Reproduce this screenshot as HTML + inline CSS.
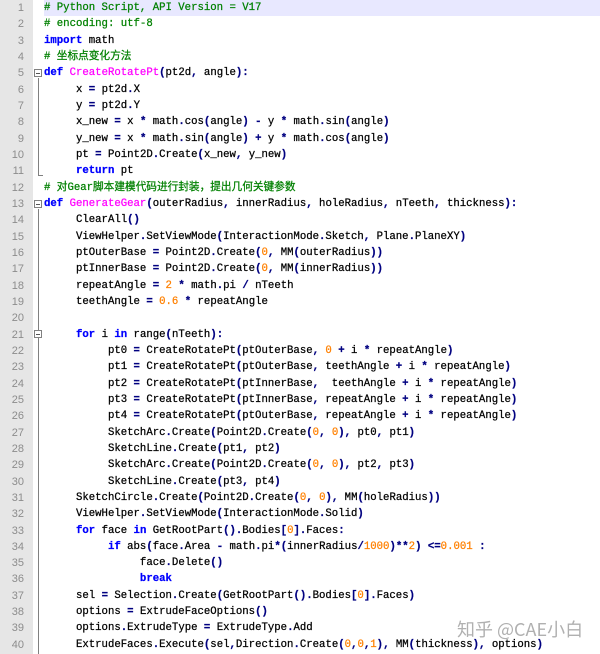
<!DOCTYPE html>
<html><head><meta charset="utf-8"><style>
html,body{margin:0;padding:0;background:#fff;width:600px;height:654px;overflow:hidden;position:relative}
.g{position:absolute;left:0;top:0;width:33px;height:654px;background:#e6e6e6}
.fl{position:absolute;left:38px;width:1px;background:#808080}
.fb{position:absolute;left:34px;width:8px;height:8px;border:1px solid #808080;background:#fff;box-sizing:border-box}
.fb:after{content:"";position:absolute;left:1px;top:3px;width:4px;height:1px;background:#555}
.hl{position:absolute;left:44px;top:0;width:556px;height:16px;background:#e8e8ff}
.ln{position:absolute;left:0;width:24px;text-align:right;font:11px "Liberation Sans",sans-serif;color:#8c8c8c}
.code{position:absolute;left:44px;top:0;font-family:"Liberation Mono","Noto Sans CJK SC",monospace;font-size:10.67px;color:#000;-webkit-text-stroke:0.25px}
.l{height:16.33px;line-height:16.33px;white-space:pre}
.c{color:#008000}.k{color:#0000ff;font-weight:bold}.f{color:#ff00ff}.n{color:#ff8000}.o{color:#000080;font-weight:bold}
.wm{position:absolute;left:457px;top:616px;font:18px "Noto Sans CJK SC",sans-serif;color:rgba(150,150,150,0.75)}
</style></head><body>
<div class="g"></div>
<div class="hl"></div>
<div class="fl" style="top:78px;height:97px"></div>
<div class="fl" style="top:209px;height:445px"></div>
<div class="fb" style="top:69px"></div>
<div class="fb" style="top:200px"></div>
<div class="fb" style="top:330px"></div>
<div style="position:absolute;left:38px;top:175px;width:5px;height:1px;background:#808080"></div>
<div class="code"><div class="l"><span class="c"># Python Script, API Version = V17</span></div><div class="l"><span class="c"># encoding: utf-8</span></div><div class="l"><span class="k">import</span> math</div><div class="l"><span class="c"># 坐标点变化方法</span></div><div class="l"><span class="k">def</span> <span class="f">CreateRotatePt</span><span class="o">(</span>pt2d<span class="o">,</span> angle<span class="o">):</span></div><div class="l">     x <span class="o">=</span> pt2d<span class="o">.</span>X</div><div class="l">     y <span class="o">=</span> pt2d<span class="o">.</span>Y</div><div class="l">     x_new <span class="o">=</span> x <span class="o">*</span> math<span class="o">.</span>cos<span class="o">(</span>angle<span class="o">)</span> <span class="o">-</span> y <span class="o">*</span> math<span class="o">.</span>sin<span class="o">(</span>angle<span class="o">)</span></div><div class="l">     y_new <span class="o">=</span> x <span class="o">*</span> math<span class="o">.</span>sin<span class="o">(</span>angle<span class="o">)</span> <span class="o">+</span> y <span class="o">*</span> math<span class="o">.</span>cos<span class="o">(</span>angle<span class="o">)</span></div><div class="l">     pt <span class="o">=</span> Point2D<span class="o">.</span>Create<span class="o">(</span>x_new<span class="o">,</span> y_new<span class="o">)</span></div><div class="l">     <span class="k">return</span> pt</div><div class="l"><span class="c"># 对Gear脚本建模代码进行封装，提出几何关键参数</span></div><div class="l"><span class="k">def</span> <span class="f">GenerateGear</span><span class="o">(</span>outerRadius<span class="o">,</span> innerRadius<span class="o">,</span> holeRadius<span class="o">,</span> nTeeth<span class="o">,</span> thickness<span class="o">):</span></div><div class="l">     ClearAll<span class="o">()</span></div><div class="l">     ViewHelper<span class="o">.</span>SetViewMode<span class="o">(</span>InteractionMode<span class="o">.</span>Sketch<span class="o">,</span> Plane<span class="o">.</span>PlaneXY<span class="o">)</span></div><div class="l">     ptOuterBase <span class="o">=</span> Point2D<span class="o">.</span>Create<span class="o">(</span><span class="n">0</span><span class="o">,</span> MM<span class="o">(</span>outerRadius<span class="o">))</span></div><div class="l">     ptInnerBase <span class="o">=</span> Point2D<span class="o">.</span>Create<span class="o">(</span><span class="n">0</span><span class="o">,</span> MM<span class="o">(</span>innerRadius<span class="o">))</span></div><div class="l">     repeatAngle <span class="o">=</span> <span class="n">2</span> <span class="o">*</span> math<span class="o">.</span>pi <span class="o">/</span> nTeeth</div><div class="l">     teethAngle <span class="o">=</span> <span class="n">0.6</span> <span class="o">*</span> repeatAngle</div><div class="l"> </div><div class="l">     <span class="k">for</span> i <span class="k">in</span> range<span class="o">(</span>nTeeth<span class="o">):</span></div><div class="l">          pt0 <span class="o">=</span> CreateRotatePt<span class="o">(</span>ptOuterBase<span class="o">,</span> <span class="n">0</span> <span class="o">+</span> i <span class="o">*</span> repeatAngle<span class="o">)</span></div><div class="l">          pt1 <span class="o">=</span> CreateRotatePt<span class="o">(</span>ptOuterBase<span class="o">,</span> teethAngle <span class="o">+</span> i <span class="o">*</span> repeatAngle<span class="o">)</span></div><div class="l">          pt2 <span class="o">=</span> CreateRotatePt<span class="o">(</span>ptInnerBase<span class="o">,</span>  teethAngle <span class="o">+</span> i <span class="o">*</span> repeatAngle<span class="o">)</span></div><div class="l">          pt3 <span class="o">=</span> CreateRotatePt<span class="o">(</span>ptInnerBase<span class="o">,</span> repeatAngle <span class="o">+</span> i <span class="o">*</span> repeatAngle<span class="o">)</span></div><div class="l">          pt4 <span class="o">=</span> CreateRotatePt<span class="o">(</span>ptOuterBase<span class="o">,</span> repeatAngle <span class="o">+</span> i <span class="o">*</span> repeatAngle<span class="o">)</span></div><div class="l">          SketchArc<span class="o">.</span>Create<span class="o">(</span>Point2D<span class="o">.</span>Create<span class="o">(</span><span class="n">0</span><span class="o">,</span> <span class="n">0</span><span class="o">),</span> pt0<span class="o">,</span> pt1<span class="o">)</span></div><div class="l">          SketchLine<span class="o">.</span>Create<span class="o">(</span>pt1<span class="o">,</span> pt2<span class="o">)</span></div><div class="l">          SketchArc<span class="o">.</span>Create<span class="o">(</span>Point2D<span class="o">.</span>Create<span class="o">(</span><span class="n">0</span><span class="o">,</span> <span class="n">0</span><span class="o">),</span> pt2<span class="o">,</span> pt3<span class="o">)</span></div><div class="l">          SketchLine<span class="o">.</span>Create<span class="o">(</span>pt3<span class="o">,</span> pt4<span class="o">)</span></div><div class="l">     SketchCircle<span class="o">.</span>Create<span class="o">(</span>Point2D<span class="o">.</span>Create<span class="o">(</span><span class="n">0</span><span class="o">,</span> <span class="n">0</span><span class="o">),</span> MM<span class="o">(</span>holeRadius<span class="o">))</span></div><div class="l">     ViewHelper<span class="o">.</span>SetViewMode<span class="o">(</span>InteractionMode<span class="o">.</span>Solid<span class="o">)</span></div><div class="l">     <span class="k">for</span> face <span class="k">in</span> GetRootPart<span class="o">().</span>Bodies<span class="o">[</span><span class="n">0</span><span class="o">].</span>Faces<span class="o">:</span></div><div class="l">          <span class="k">if</span> abs<span class="o">(</span>face<span class="o">.</span>Area <span class="o">-</span> math<span class="o">.</span>pi<span class="o">*(</span>innerRadius<span class="o">/</span><span class="n">1000</span><span class="o">)**</span><span class="n">2</span><span class="o">)</span> <span class="o">&lt;=</span><span class="n">0.001</span> <span class="o">:</span></div><div class="l">               face<span class="o">.</span>Delete<span class="o">()</span></div><div class="l">               <span class="k">break</span></div><div class="l">     sel <span class="o">=</span> Selection<span class="o">.</span>Create<span class="o">(</span>GetRootPart<span class="o">().</span>Bodies<span class="o">[</span><span class="n">0</span><span class="o">].</span>Faces<span class="o">)</span></div><div class="l">     options <span class="o">=</span> ExtrudeFaceOptions<span class="o">()</span></div><div class="l">     options<span class="o">.</span>ExtrudeType <span class="o">=</span> ExtrudeType<span class="o">.</span>Add</div><div class="l">     ExtrudeFaces<span class="o">.</span>Execute<span class="o">(</span>sel<span class="o">,</span>Direction<span class="o">.</span>Create<span class="o">(</span><span class="n">0</span><span class="o">,</span><span class="n">0</span><span class="o">,</span><span class="n">1</span><span class="o">),</span> MM<span class="o">(</span>thickness<span class="o">),</span> options<span class="o">)</span></div></div>
<div class="ln" style="top:0px;line-height:16.33px">1<br>2<br>3<br>4<br>5<br>6<br>7<br>8<br>9<br>10<br>11<br>12<br>13<br>14<br>15<br>16<br>17<br>18<br>19<br>20<br>21<br>22<br>23<br>24<br>25<br>26<br>27<br>28<br>29<br>30<br>31<br>32<br>33<br>34<br>35<br>36<br>37<br>38<br>39<br>40</div>
<div class="wm">知乎 @CAE小白</div>
</body></html>
